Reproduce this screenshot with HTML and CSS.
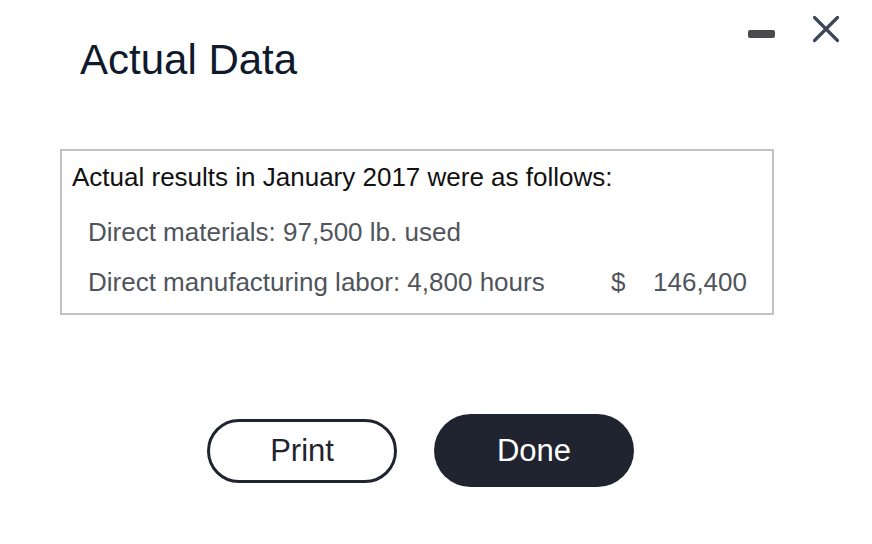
FILE: index.html
```html
<!DOCTYPE html>
<html>
<head>
<meta charset="utf-8">
<link rel="stylesheet" href="styles.css">
</head>
<body>
<div class="dialog">
  <div class="header">
    <h1 class="title">Actual Data</h1>
    <div class="controls">
      <span class="minimize"></span>
      <svg class="close" width="28" height="28" viewBox="0 0 28 28"><path d="M2.5 2.5 L25.5 25.5 M25.5 2.5 L2.5 25.5" stroke="#3b4656" stroke-width="3.2" stroke-linecap="round" fill="none"/></svg>
    </div>
  </div>
  <div class="databox">
    <div class="intro">Actual results in January 2017 were as follows:</div>
    <div class="rows">
      <div class="row"><span class="label">Direct materials: 97,500 lb. used</span></div>
      <div class="row"><span class="label">Direct manufacturing labor: 4,800 hours</span><span class="cur">$</span><span class="amt">146,400</span></div>
    </div>
  </div>
  <div class="actions">
    <button class="btn btn-outline">Print</button>
    <button class="btn btn-solid">Done</button>
  </div>
</div>
</body>
</html>
```
FILE: styles.css
```css
html, body {
  margin: 0;
  padding: 0;
  background: #ffffff;
}
.dialog {
  width: 872px;
  height: 544px;
  font-family: "Liberation Sans", Arial, Helvetica, sans-serif;
  overflow: hidden;
}
.header {
  display: flex;
  justify-content: space-between;
  align-items: flex-start;
  padding: 15px 32px 0 80px;
}
.title {
  margin: 20px 0 0 0;
  font-size: 42px;
  line-height: 50px;
  font-weight: normal;
  color: #0f1a2c;
}
.controls {
  display: flex;
  align-items: flex-start;
  gap: 37px;
}
.minimize {
  display: block;
  width: 27px;
  height: 8px;
  margin-top: 15px;
  border-radius: 2px;
  background: #4a4a4c;
}
.close {
  display: block;
}
.databox {
  margin: 64px 0 0 60px;
  width: 710px;
  border: 2px solid #c2c2c2;
  padding: 11px 0 16px 0;
}
.intro {
  font-size: 26px;
  line-height: 30px;
  color: #111111;
  padding-left: 10px;
}
.rows {
  display: flex;
  flex-direction: column;
  gap: 20px;
  margin-top: 25px;
  padding-left: 26px;
  padding-right: 28px;
}
.row {
  display: flex;
  font-size: 26px;
  line-height: 30px;
  color: #50555c;
}
.label {
  flex: 1;
}
.cur {
  width: 42px;
}
.amt {
  width: 91px;
  text-align: right;
}
.actions {
  display: flex;
  align-items: center;
  gap: 37px;
  margin-top: 99px;
  padding-left: 207px;
}
.btn {
  font-family: "Liberation Sans", Arial, Helvetica, sans-serif;
  font-size: 31px;
  border-radius: 40px;
  cursor: pointer;
  padding: 0;
}
.btn-outline {
  width: 190px;
  height: 64px;
  background: #ffffff;
  border: 3px solid #1f2430;
  color: #1f2430;
}
.btn-solid {
  width: 200px;
  height: 73px;
  background: #1f2430;
  border: none;
  color: #ffffff;
}
```
